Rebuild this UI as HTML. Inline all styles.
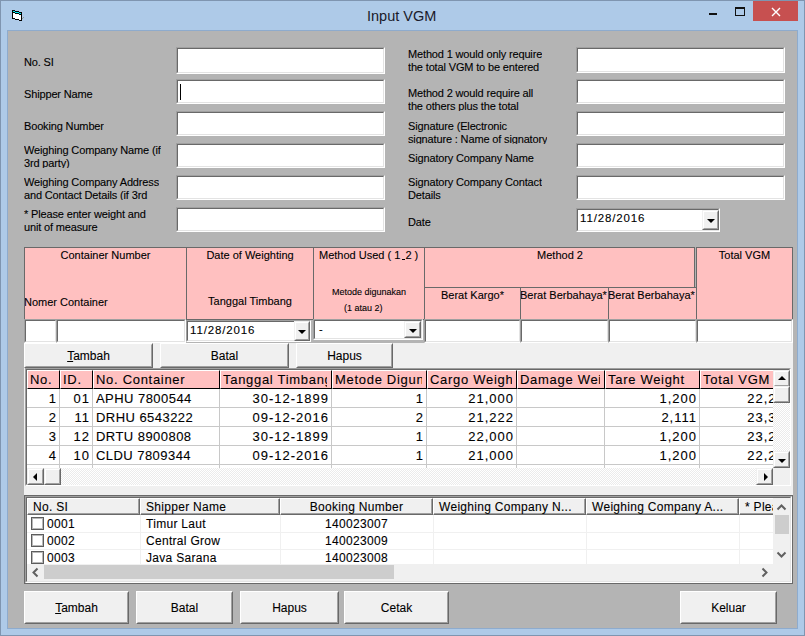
<!DOCTYPE html>
<html><head><meta charset="utf-8">
<style>
*{margin:0;padding:0;box-sizing:border-box}
html,body{width:805px;height:636px;overflow:hidden}
body{position:relative;background:#aecae8;font-family:"Liberation Sans",sans-serif;color:#000;-webkit-text-stroke:0.1px #000}
.a{position:absolute}
.frame{left:0;top:0;width:805px;height:636px;border:1px solid #7f95b0}
.client{left:7px;top:30px;width:791px;height:599px;border:1px solid #8eabcd;background:#b4b4b4}
.lbl{position:absolute;font-size:11px;line-height:13px;letter-spacing:-0.15px;color:#000;white-space:nowrap;overflow:hidden}
.tb{position:absolute;background:#fff;border-style:solid;border-width:1px;border-color:#a0a0a0 #fff #fff #a0a0a0}
.tb::before{content:"";position:absolute;left:0;top:0;right:0;bottom:0;border-style:solid;border-width:1px;border-color:#696969 #e3e3e3 #e3e3e3 #696969}
.btn{position:absolute;background:#f0f0f0;border-style:solid;border-width:1px;border-color:#fff #696969 #696969 #fff;font-size:12px;text-align:center;color:#000}
.btn::before{content:"";position:absolute;left:0;top:0;right:0;bottom:0;border-style:solid;border-width:1px;border-color:#f0f0f0 #a0a0a0 #a0a0a0 #f0f0f0}
.pk{position:absolute;background:#ffc0c0;border:1px solid #696969;font-size:11px;line-height:13px;white-space:nowrap;overflow:hidden}
.dd{position:absolute;background:#f0f0f0;border-style:solid;border-width:1px;border-color:#f0f0f0 #696969 #696969 #f0f0f0}
.dd::before{content:"";position:absolute;left:0;top:0;right:0;bottom:0;border-style:solid;border-width:1px;border-color:#fff #a0a0a0 #a0a0a0 #fff}
.dd::after{content:"";position:absolute;left:50%;top:50%;margin-left:-4px;margin-top:-1px;border-style:solid;border-width:4px 4px 0 4px;border-color:#000 transparent transparent transparent}
.u{text-decoration:underline}
.lh{position:absolute;top:0;height:17px;background:#f0f0f0;border-style:solid;border-width:1px;border-color:#fff #696969 #696969 #fff;box-shadow:inset -1px -1px 0 #a0a0a0;font-size:12px;line-height:16px;letter-spacing:0.3px;white-space:nowrap;overflow:hidden}
.lc{position:absolute;height:17px;font-size:12px;line-height:19px;letter-spacing:0.3px;white-space:nowrap}

.gh{position:absolute;top:0;height:19px;background:#ffc0c0;border-style:solid;border-width:1px;border-color:#fff #000 #000 #fff;overflow:hidden;white-space:nowrap;font-size:13px;line-height:18px;padding-left:2px;letter-spacing:0.7px}
.gh span{display:block;overflow:hidden;margin-right:4px}
.gc{position:absolute;height:18px;font-size:13px;line-height:18px;white-space:nowrap;overflow:hidden;letter-spacing:0.45px;padding-top:1px}
.sbb{position:absolute;background:#f0f0f0;border-style:solid;border-width:1px;border-color:#f0f0f0 #696969 #696969 #f0f0f0}
.sbb::before{content:"";position:absolute;left:0;top:0;right:0;bottom:0;border-style:solid;border-width:1px;border-color:#fff #a0a0a0 #a0a0a0 #fff}
.tri{position:absolute;left:50%;top:50%;width:0;height:0;border-style:solid}
.tri.up{margin-left:-4px;margin-top:-3px;border-width:0 4px 4px 4px;border-color:transparent transparent #000 transparent}
.tri.dn{margin-left:-4px;margin-top:-1px;border-width:4px 4px 0 4px;border-color:#000 transparent transparent transparent}
.tri.lt{margin-left:-3px;margin-top:-4px;border-width:4px 4px 4px 0;border-color:transparent #000 transparent transparent}
.tri.rt{margin-left:-1px;margin-top:-4px;border-width:4px 0 4px 4px;border-color:transparent transparent transparent #000}

</style></head><body>
<div class="a frame"></div>
<!-- title bar -->
<svg class="a" style="left:0;top:0" width="30" height="30" shape-rendering="crispEdges">
<path d="M12 10h3v1h4v1h3v9h-3v-1h-4v-1h-3z" fill="#000"/>
<path d="M13 11h2v1h4v1h2v7h-2v-1h-4v-1h-2z" fill="#fff"/>
<rect x="13" y="11" width="2" height="1" fill="#00e8f0"/><rect x="15" y="12" width="4" height="1" fill="#00e8f0"/><rect x="19" y="13" width="2" height="1" fill="#00e8f0"/>
<rect x="13" y="12" width="2" height="1" fill="#000"/><rect x="15" y="13" width="4" height="1" fill="#000"/><rect x="19" y="14" width="2" height="1" fill="#000"/>
<path d="M22 19h1v-1h1v-1h-1v1h-1z" fill="#8a8a80" opacity="0.8"/>
</svg>
<div class="a" style="left:367px;top:7px;font-size:14.5px;line-height:18px;color:#1a1a2a;-webkit-text-stroke:0">Input VGM</div>
<div class="a" style="left:709px;top:13px;width:8px;height:2px;background:#111"></div>
<div class="a" style="left:735px;top:7px;width:10px;height:9px;border:1px solid #111;border-top-width:2px"></div>
<div class="a" style="left:753px;top:1px;width:45px;height:20px;background:#c75050"></div>
<svg class="a" style="left:771px;top:7px" width="10" height="10" viewBox="0 0 10 10"><path d="M1 1L9 9M9 1L1 9" stroke="#fff" stroke-width="1.4"/></svg>
<div class="a client"></div>

<!-- top form left -->
<div class="lbl" style="left:24px;top:56px">No. SI</div>
<div class="lbl" style="left:24px;top:88px">Shipper Name</div>
<div class="lbl" style="left:24px;top:120px">Booking Number</div>
<div class="lbl" style="left:24px;top:144px;height:24px">Weighing Company Name (if<br>3rd party)</div>
<div class="lbl" style="left:24px;top:176px;height:24px">Weighing Company Address<br>and Contact Details (if 3rd</div>
<div class="lbl" style="left:24px;top:208px;height:25px">* Please enter weight and<br>unit of measure</div>
<div class="tb" style="left:176px;top:47px;width:209px;height:27px"></div>
<div class="tb" style="left:176px;top:79px;width:209px;height:25px"><div class="a" style="left:3px;top:4px;width:1px;height:16px;background:#000"></div></div>
<div class="tb" style="left:176px;top:111px;width:209px;height:25px"></div>
<div class="tb" style="left:176px;top:143px;width:209px;height:25px"></div>
<div class="tb" style="left:176px;top:175px;width:209px;height:25px"></div>
<div class="tb" style="left:176px;top:207px;width:209px;height:25px"></div>

<!-- top form right -->
<div class="lbl" style="left:408px;top:48px">Method 1 would only require<br>the total VGM to be entered</div>
<div class="lbl" style="left:408px;top:87px;height:24px">Method 2 would require all<br>the others plus the total</div>
<div class="lbl" style="left:408px;top:120px;height:24px">Signature (Electronic<br>signature : Name of signatory</div>
<div class="lbl" style="left:408px;top:152px">Signatory Company Name</div>
<div class="lbl" style="left:408px;top:176px">Signatory Company Contact<br>Details</div>
<div class="lbl" style="left:408px;top:216px">Date</div>
<div class="tb" style="left:576px;top:47px;width:209px;height:26px"></div>
<div class="tb" style="left:576px;top:79px;width:209px;height:25px"></div>
<div class="tb" style="left:576px;top:111px;width:209px;height:25px"></div>
<div class="tb" style="left:576px;top:143px;width:209px;height:25px"></div>
<div class="tb" style="left:576px;top:175px;width:209px;height:25px"></div>
<div class="tb" style="left:576px;top:208px;width:144px;height:24px"><div class="a" style="left:3px;top:2px;font-size:11.5px;line-height:14px;letter-spacing:0.85px">11/28/2016</div></div>
<div class="dd" style="left:702px;top:210px;width:17px;height:20px"></div>

<!--HEADER-->
<div class="pk" style="left:24px;top:247px;width:163px;height:73px">
  <div class="a" style="left:0;width:161px;top:1px;text-align:center">Container Number</div>
  <div class="a" style="left:-1px;top:48px">Nomer Container</div>
</div>
<div class="pk" style="left:186px;top:247px;width:128px;height:73px">
  <div class="a" style="left:0;width:126px;top:1px;text-align:center">Date of Weighting</div>
  <div class="a" style="left:0;width:126px;top:47px;text-align:center">Tanggal Timbang</div>
</div>
<div class="pk" style="left:313px;top:247px;width:112px;height:73px">
  <div class="a" style="left:5px;top:1px">Method Used ( 1 <span style="margin-left:2px">2</span> )</div>
  <div class="a" style="left:0;width:110px;top:39px;text-align:center;font-size:9px;line-height:11px">Metode digunakan</div>
  <div class="a" style="left:30px;top:55px;font-size:9px;line-height:11px">(1 atau 2)</div>
</div>
<div class="a" style="left:402px;top:259px;width:3px;height:1px;background:#000;z-index:2"></div>
<div class="pk" style="left:424px;top:247px;width:271px;height:41px">
  <div class="a" style="left:0;width:270px;top:1px;text-align:center">Method 2</div>
</div>
<div class="pk" style="left:424px;top:287px;width:97px;height:33px">
  <div class="a" style="left:0;width:95px;top:1px;text-align:center">Berat Kargo*</div>
</div>
<div class="pk" style="left:520px;top:287px;width:89px;height:33px">
  <div class="a" style="left:-1px;top:1px">Berat Berbahaya*</div>
</div>
<div class="pk" style="left:608px;top:287px;width:89px;height:33px">
  <div class="a" style="left:-1px;top:1px">Berat Berbahaya*</div>
</div>
<div class="pk" style="left:696px;top:247px;width:97px;height:73px">
  <div class="a" style="left:0;width:95px;top:1px;text-align:center">Total VGM</div>
</div>
<!-- input row -->
<div class="tb" style="left:24px;top:319px;width:33px;height:24px"></div>
<div class="tb" style="left:56px;top:319px;width:130px;height:24px"></div>
<div class="tb" style="left:186px;top:320px;width:125px;height:22px"><div class="a" style="left:3px;top:2px;font-size:11.5px;line-height:14px;letter-spacing:0.85px">11/28/2016</div></div>
<div class="dd" style="left:294px;top:321px;width:16px;height:20px"></div>
<div class="tb" style="left:313px;top:319px;width:110px;height:21px"><div class="a" style="left:5px;top:3px;font-size:11px;line-height:13px">-</div></div>
<div class="dd" style="left:404px;top:321px;width:17px;height:17px"></div>
<div class="tb" style="left:424px;top:319px;width:97px;height:24px"></div>
<div class="tb" style="left:520px;top:319px;width:89px;height:24px"></div>
<div class="tb" style="left:608px;top:319px;width:89px;height:24px"></div>
<div class="tb" style="left:696px;top:319px;width:97px;height:24px"></div>
<!-- light panel -->
<div class="a" style="left:24px;top:343px;width:769px;height:152px;background:#f0f0f0"></div>
<div class="btn" style="left:24px;top:343px;width:129px;height:25px;line-height:24px"><span class="u">T</span>ambah</div>
<div class="btn" style="left:160px;top:343px;width:129px;height:25px;line-height:24px">Batal</div>
<div class="btn" style="left:296px;top:343px;width:97px;height:25px;line-height:24px">Hapus</div>
<!--GRID-->
<div class="a" style="left:25px;top:368px;width:766px;height:118px;background:#fff;border-style:solid;border-width:1px;border-color:#a0a0a0 #fff #fff #a0a0a0"></div>
<div class="a" style="left:26px;top:369px;width:764px;height:116px;border-style:solid;border-width:1px;border-color:#696969 #e3e3e3 #e3e3e3 #696969"></div>
<div class="a" style="left:27px;top:370px;width:746px;height:98px;overflow:hidden">
<div class="gh" style="left:0px;width:33px"><span>No.</span></div>
<div class="a" style="left:32px;top:19px;width:1px;height:79px;background:#c8c8c8"></div>
<div class="gh" style="left:33px;width:33px"><span>ID.</span></div>
<div class="a" style="left:65px;top:19px;width:1px;height:79px;background:#c8c8c8"></div>
<div class="gh" style="left:66px;width:127px"><span>No. Container</span></div>
<div class="a" style="left:192px;top:19px;width:1px;height:79px;background:#c8c8c8"></div>
<div class="gh" style="left:193px;width:112px"><span>Tanggal Timbang</span></div>
<div class="a" style="left:304px;top:19px;width:1px;height:79px;background:#c8c8c8"></div>
<div class="gh" style="left:305px;width:95px"><span>Metode Digunakan</span></div>
<div class="a" style="left:399px;top:19px;width:1px;height:79px;background:#c8c8c8"></div>
<div class="gh" style="left:400px;width:90px"><span>Cargo Weight</span></div>
<div class="a" style="left:489px;top:19px;width:1px;height:79px;background:#c8c8c8"></div>
<div class="gh" style="left:490px;width:88px"><span>Damage Weight</span></div>
<div class="a" style="left:577px;top:19px;width:1px;height:79px;background:#c8c8c8"></div>
<div class="gh" style="left:578px;width:95px"><span>Tare Weight</span></div>
<div class="a" style="left:672px;top:19px;width:1px;height:79px;background:#c8c8c8"></div>
<div class="gh" style="left:673px;width:101px"><span>Total VGM</span></div>
<div class="a" style="left:773px;top:19px;width:1px;height:79px;background:#c8c8c8"></div>
<div class="a" style="left:0;top:37px;width:746px;height:1px;background:#c8c8c8"></div>
<div class="gc" style="left:0px;width:30px;top:19px;text-align:right;letter-spacing:1px;margin-right:-1px">1</div>
<div class="gc" style="left:33px;width:30px;top:19px;text-align:right;letter-spacing:1px;margin-right:-1px">01</div>
<div class="gc" style="left:69px;width:126px;top:19px">APHU 7800544</div>
<div class="gc" style="left:193px;width:109px;top:19px;text-align:right;letter-spacing:1px;margin-right:-1px">30-12-1899</div>
<div class="gc" style="left:305px;width:92px;top:19px;text-align:right;letter-spacing:1px;margin-right:-1px">1</div>
<div class="gc" style="left:400px;width:87px;top:19px;text-align:right;letter-spacing:1px;margin-right:-1px">21,000</div>
<div class="gc" style="left:578px;width:92px;top:19px;text-align:right;letter-spacing:1px;margin-right:-1px">1,200</div>
<div class="gc" style="left:673px;width:93px;top:19px;text-align:right;letter-spacing:1px;margin-right:-1px">22,200</div>
<div class="a" style="left:0;top:56px;width:746px;height:1px;background:#c8c8c8"></div>
<div class="gc" style="left:0px;width:30px;top:38px;text-align:right;letter-spacing:1px;margin-right:-1px">2</div>
<div class="gc" style="left:33px;width:30px;top:38px;text-align:right;letter-spacing:1px;margin-right:-1px">11</div>
<div class="gc" style="left:69px;width:126px;top:38px">DRHU 6543222</div>
<div class="gc" style="left:193px;width:109px;top:38px;text-align:right;letter-spacing:1px;margin-right:-1px">09-12-2016</div>
<div class="gc" style="left:305px;width:92px;top:38px;text-align:right;letter-spacing:1px;margin-right:-1px">2</div>
<div class="gc" style="left:400px;width:87px;top:38px;text-align:right;letter-spacing:1px;margin-right:-1px">21,222</div>
<div class="gc" style="left:578px;width:92px;top:38px;text-align:right;letter-spacing:1px;margin-right:-1px">2,111</div>
<div class="gc" style="left:673px;width:93px;top:38px;text-align:right;letter-spacing:1px;margin-right:-1px">23,333</div>
<div class="a" style="left:0;top:75px;width:746px;height:1px;background:#c8c8c8"></div>
<div class="gc" style="left:0px;width:30px;top:57px;text-align:right;letter-spacing:1px;margin-right:-1px">3</div>
<div class="gc" style="left:33px;width:30px;top:57px;text-align:right;letter-spacing:1px;margin-right:-1px">12</div>
<div class="gc" style="left:69px;width:126px;top:57px">DRTU 8900808</div>
<div class="gc" style="left:193px;width:109px;top:57px;text-align:right;letter-spacing:1px;margin-right:-1px">30-12-1899</div>
<div class="gc" style="left:305px;width:92px;top:57px;text-align:right;letter-spacing:1px;margin-right:-1px">1</div>
<div class="gc" style="left:400px;width:87px;top:57px;text-align:right;letter-spacing:1px;margin-right:-1px">22,000</div>
<div class="gc" style="left:578px;width:92px;top:57px;text-align:right;letter-spacing:1px;margin-right:-1px">1,200</div>
<div class="gc" style="left:673px;width:93px;top:57px;text-align:right;letter-spacing:1px;margin-right:-1px">23,200</div>
<div class="a" style="left:0;top:94px;width:746px;height:1px;background:#c8c8c8"></div>
<div class="gc" style="left:0px;width:30px;top:76px;text-align:right;letter-spacing:1px;margin-right:-1px">4</div>
<div class="gc" style="left:33px;width:30px;top:76px;text-align:right;letter-spacing:1px;margin-right:-1px">10</div>
<div class="gc" style="left:69px;width:126px;top:76px">CLDU 7809344</div>
<div class="gc" style="left:193px;width:109px;top:76px;text-align:right;letter-spacing:1px;margin-right:-1px">09-12-2016</div>
<div class="gc" style="left:305px;width:92px;top:76px;text-align:right;letter-spacing:1px;margin-right:-1px">1</div>
<div class="gc" style="left:400px;width:87px;top:76px;text-align:right;letter-spacing:1px;margin-right:-1px">21,000</div>
<div class="gc" style="left:578px;width:92px;top:76px;text-align:right;letter-spacing:1px;margin-right:-1px">1,200</div>
<div class="gc" style="left:673px;width:93px;top:76px;text-align:right;letter-spacing:1px;margin-right:-1px">22,200</div>
</div>

<!-- grid scrollbars -->
<div class="a" style="left:773px;top:370px;width:17px;height:98px;background-color:#f0f0f0;background-image:repeating-conic-gradient(#fff 0% 25%, #ebebeb 0% 50%);background-size:2px 2px"></div>
<div class="sbb" style="left:773px;top:370px;width:17px;height:17px"><i class="tri up"></i></div>
<div class="sbb" style="left:773px;top:386px;width:17px;height:17px"></div>
<div class="sbb" style="left:773px;top:451px;width:17px;height:17px"><i class="tri dn"></i></div>
<div class="a" style="left:27px;top:468px;width:746px;height:17px;background-color:#f0f0f0;background-image:repeating-conic-gradient(#fff 0% 25%, #ebebeb 0% 50%);background-size:2px 2px"></div>
<div class="sbb" style="left:27px;top:468px;width:17px;height:17px"><i class="tri lt"></i></div>
<div class="sbb" style="left:44px;top:468px;width:17px;height:17px"></div>
<div class="sbb" style="left:756px;top:468px;width:17px;height:17px"><i class="tri rt"></i></div>
<div class="a" style="left:773px;top:468px;width:17px;height:17px;background:#f0f0f0"></div>

<!--LIST-->
<div class="a" style="left:24px;top:495px;width:769px;height:89px;background:#fff;border:1px solid #696969"></div>
<div class="a" style="left:25px;top:496px;width:767px;height:87px;border-style:solid;border-width:1px;border-color:#a0a0a0 #fff #fff #a0a0a0"></div><div class="a" style="left:26px;top:497px;width:765px;height:85px;border-style:solid;border-width:1px;border-color:#696969 #e3e3e3 #e3e3e3 #696969"></div>
<div class="a" style="left:27px;top:498px;width:746px;height:66px;overflow:hidden">
<div class="lh" style="left:0px;width:113px;text-align:left;padding-left:5px">No. SI</div>
<div class="a" style="left:113px;top:17px;width:1px;height:50px;background:#f0f0f0"></div>
<div class="lh" style="left:113px;width:140px;text-align:left;padding-left:5px">Shipper Name</div>
<div class="a" style="left:253px;top:17px;width:1px;height:50px;background:#f0f0f0"></div>
<div class="lh" style="left:253px;width:153px;text-align:center;padding-left:0px">Booking Number</div>
<div class="a" style="left:406px;top:17px;width:1px;height:50px;background:#f0f0f0"></div>
<div class="lh" style="left:406px;width:153px;text-align:left;padding-left:5px">Weighing Company N...</div>
<div class="a" style="left:559px;top:17px;width:1px;height:50px;background:#f0f0f0"></div>
<div class="lh" style="left:559px;width:153px;text-align:left;padding-left:5px">Weighing Company A...</div>
<div class="a" style="left:712px;top:17px;width:1px;height:50px;background:#f0f0f0"></div>
<div class="lh" style="left:712px;width:162px;text-align:left;padding-left:5px">* Please enter weight</div>
<div class="a" style="left:874px;top:17px;width:1px;height:50px;background:#f0f0f0"></div>
<div class="a" style="left:0;top:34px;width:746px;height:1px;background:#f0f0f0"></div>
<div class="a" style="left:4px;top:19px;width:13px;height:13px;border:1px solid #5c5c5c;background:#fff;box-shadow:inset 0 0 0 1px #b8b8b8"></div>
<div class="lc" style="left:20px;top:17px">0001</div>
<div class="lc" style="left:119px;top:17px">Timur Laut</div>
<div class="lc" style="left:253px;top:17px;width:153px;text-align:center">140023007</div>
<div class="a" style="left:0;top:51px;width:746px;height:1px;background:#f0f0f0"></div>
<div class="a" style="left:4px;top:36px;width:13px;height:13px;border:1px solid #5c5c5c;background:#fff;box-shadow:inset 0 0 0 1px #b8b8b8"></div>
<div class="lc" style="left:20px;top:34px">0002</div>
<div class="lc" style="left:119px;top:34px">Central Grow</div>
<div class="lc" style="left:253px;top:34px;width:153px;text-align:center">140023009</div>
<div class="a" style="left:0;top:68px;width:746px;height:1px;background:#f0f0f0"></div>
<div class="a" style="left:4px;top:53px;width:13px;height:13px;border:1px solid #5c5c5c;background:#fff;box-shadow:inset 0 0 0 1px #b8b8b8"></div>
<div class="lc" style="left:20px;top:51px">0003</div>
<div class="lc" style="left:119px;top:51px">Java Sarana</div>
<div class="lc" style="left:253px;top:51px;width:153px;text-align:center">140023008</div>
</div>
<div class="a" style="left:773px;top:498px;width:17px;height:67px;background:#f0f0f0"></div>
<div class="a" style="left:775px;top:515px;width:14px;height:19px;background:#cdcdcd"></div>
<svg class="a" style="left:776px;top:503px" width="11" height="8" viewBox="0 0 11 8"><path d="M1.5 6.5L5.5 2.5L9.5 6.5" stroke="#606060" stroke-width="2" fill="none"/></svg>
<svg class="a" style="left:776px;top:551px" width="11" height="8" viewBox="0 0 11 8"><path d="M1.5 1.5L5.5 5.5L9.5 1.5" stroke="#606060" stroke-width="2" fill="none"/></svg>
<div class="a" style="left:27px;top:564px;width:763px;height:17px;background:#f0f0f0"></div>
<div class="a" style="left:44px;top:565px;width:350px;height:14px;background:#cdcdcd"></div>
<svg class="a" style="left:31px;top:567px" width="8" height="11" viewBox="0 0 8 11"><path d="M6.5 1.5L2.5 5.5L6.5 9.5" stroke="#606060" stroke-width="2" fill="none"/></svg>
<svg class="a" style="left:761px;top:567px" width="8" height="11" viewBox="0 0 8 11"><path d="M1.5 1.5L5.5 5.5L1.5 9.5" stroke="#606060" stroke-width="2" fill="none"/></svg>
<!--BUTTONS-->

<div class="btn" style="left:24px;top:591px;width:105px;height:33px;line-height:32px"><span class="u">T</span>ambah</div>
<div class="btn" style="left:136px;top:591px;width:97px;height:33px;line-height:32px">Batal</div>
<div class="btn" style="left:240px;top:591px;width:99px;height:33px;line-height:32px">Hapus</div>
<div class="btn" style="left:344px;top:591px;width:105px;height:33px;line-height:32px">Cetak</div>
<div class="btn" style="left:680px;top:591px;width:97px;height:33px;line-height:32px">Keluar</div>

</body></html>
